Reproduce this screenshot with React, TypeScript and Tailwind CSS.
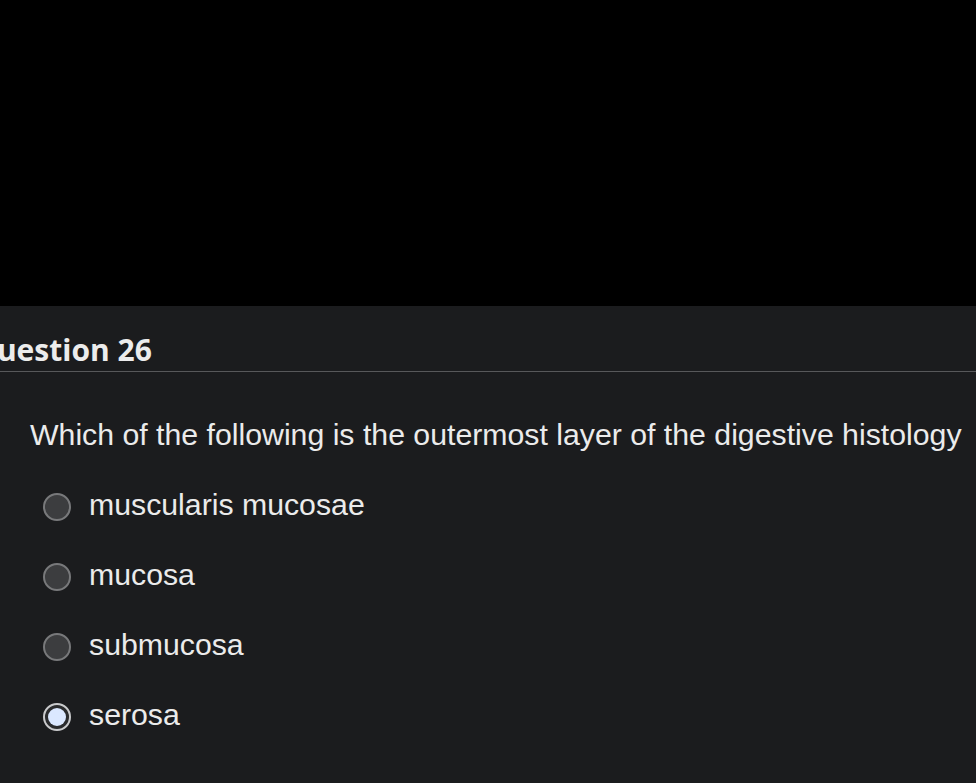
import React from "react";

const options = [
  { label: "muscularis mucosae", checked: false },
  { label: "mucosa", checked: false },
  { label: "submucosa", checked: false },
  { label: "serosa", checked: true },
];

function Radio({ checked }: { checked: boolean }) {
  if (checked) {
    return (
      <span className="flex h-[28px] w-[28px] shrink-0 items-center justify-center rounded-full border-[2px] border-[#c9cacc] bg-[#2a2b2d]">
        <span className="h-[18px] w-[18px] rounded-full bg-[#dbe8ff]" />
      </span>
    );
  }
  return (
    <span className="h-[28px] w-[28px] shrink-0 rounded-full border-[2px] border-[#78797b] bg-[#3c3d3f]" />
  );
}

export default function App() {
  return (
    <div className="h-[783px] w-[976px] overflow-hidden bg-[#1b1c1e]">
      <div className="h-[306px] bg-black" />
      <div className="flex h-[66px] items-end border-b border-[#57585a] pb-[6px]">
        <h2
          className="-ml-[27px] text-[30px] font-bold leading-none text-[#ececec]"
          style={{ fontFamily: '"Open Sans", sans-serif' }}
        >
          Question 26
        </h2>
      </div>
      <div style={{ fontFamily: '"Liberation Sans", Arial, sans-serif' }}>
        <p className="ml-[30px] mt-[48px] whitespace-nowrap text-[30.25px] leading-none text-[#ebebeb]">
          Which of the following is the outermost layer of the digestive histology
        </p>
        <div className="mt-[22px] flex flex-col">
          {options.map((o) => (
            <div key={o.label} className="flex h-[70px] items-center gap-[18px] pl-[43px]">
              <Radio checked={o.checked} />
              <span className="pb-[4px] text-[30.25px] leading-none text-[#ebebeb]">{o.label}</span>
            </div>
          ))}
        </div>
      </div>
    </div>
  );
}
